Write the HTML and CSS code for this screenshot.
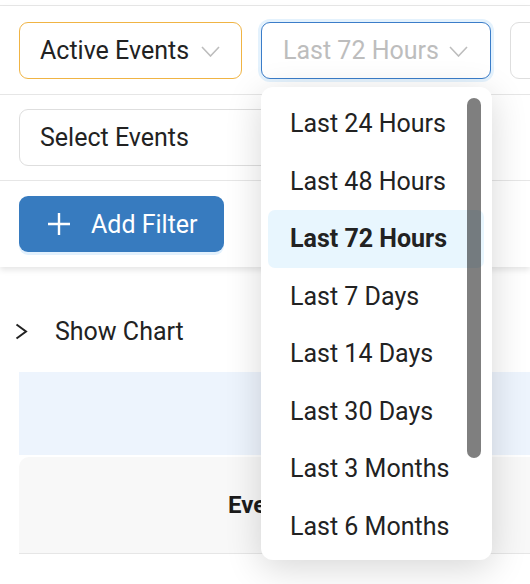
FILE: index.html
```html
<!DOCTYPE html>
<html lang="en">
<head>
<meta charset="utf-8">
<title>Events</title>
<link rel="stylesheet" href="styles.css">
</head>
<body>
<div class="page">
  <div class="topbar"></div>
  <section class="filters">
    <div class="row row-selects">
      <button class="select select-active">
        <span class="select-label">Active Events</span>
        <svg class="chev" width="19" height="11" viewBox="0 0 19 11"><polyline points="1,1 9.5,10 18,1" fill="none" stroke="#bdbdbd" stroke-width="1.6"/></svg>
      </button>
      <button class="select select-focus">
        <span class="select-label placeholder">Last 72 Hours</span>
        <svg class="chev" width="19" height="11" viewBox="0 0 19 11"><polyline points="1,1 9.5,10 18,1" fill="none" stroke="#bdbdbd" stroke-width="1.6"/></svg>
      </button>
      <button class="select select-more"></button>
    </div>
    <div class="row row-events">
      <div class="input">Select Events</div>
    </div>
    <div class="row row-actions">
      <button class="add-filter">
        <svg width="24" height="24" viewBox="0 0 24 24"><path d="M12 1v22M1 12h22" stroke="#fff" stroke-width="2.4" fill="none"/></svg>
        <span>Add Filter</span>
      </button>
    </div>
  </section>

  <div class="chart-toggle">
    <svg width="13" height="17" viewBox="0 0 13 17"><polyline points="1.5,1.5 11,8.5 1.5,15.5" fill="none" stroke="#222" stroke-width="2"/></svg>
    <span>Show Chart</span>
  </div>

  <div class="band"></div>
  <div class="table-head">
    <span class="th">Events</span>
  </div>

  <div class="dropdown">
    <ul class="options">
      <li class="option">Last 24 Hours</li>
      <li class="option">Last 48 Hours</li>
      <li class="option selected">Last 72 Hours</li>
      <li class="option">Last 7 Days</li>
      <li class="option">Last 14 Days</li>
      <li class="option">Last 30 Days</li>
      <li class="option">Last 3 Months</li>
      <li class="option">Last 6 Months</li>
    </ul>
    <div class="scrollbar"></div>
  </div>
</div>
</body>
</html>
```

FILE: styles.css
```css
* { box-sizing: border-box; }
html, body {
  margin: 0;
  padding: 0;
  background: #fff;
  overflow: hidden;
}
body {
  font-family: Roboto, "Noto Sans", "Liberation Sans", sans-serif;
  color: #222;
  font-size: 25px;
}
.page {
  position: relative;
  width: 530px;
  height: 584px;
  overflow: hidden;
}
.topbar {
  height: 6px;
  border-bottom: 1px solid #e8e8e8;
}
.filters {
  background: #fff;
  box-shadow: 0 3px 6px rgba(0,0,0,0.10);
  position: relative;
}
.row {
  padding-left: 19px;
  display: flex;
  gap: 19px;
  overflow: hidden;
}
.row-selects {
  padding-top: 16px;
  padding-bottom: 15px;
  border-bottom: 1px solid #e6e6e6;
}
.row-events {
  padding-top: 14px;
  padding-bottom: 14px;
  border-bottom: 1px solid #e6e6e6;
}
.row-actions {
  padding-top: 15px;
  padding-bottom: 15px;
}
.select {
  flex-shrink: 0;
  height: 57px;
  border-radius: 9px;
  background: #fff;
  display: flex;
  align-items: center;
  justify-content: space-between;
  padding: 0 21px 0 20px;
  font: inherit;
  color: #222;
}
.select-active {
  width: 223px;
  border: 1px solid #f0b444;
}
.select-focus {
  width: 230px;
  border: 1px solid #3b7dc9;
  box-shadow: 0 0 0 3px #e4f2fd;
  padding-left: 21px;
  padding-right: 22px;
}
.select-more {
  width: 200px;
  border: 1px solid #dedede;
}
.placeholder { color: #bdbdbd; }
.chev { display: block; margin-top: 2px; }
.input {
  width: 300px;
  height: 57px;
  border: 1px solid #dedede;
  border-radius: 9px;
  display: flex;
  align-items: center;
  padding-left: 20px;
  flex-shrink: 0;
}
.add-filter {
  width: 205px;
  height: 56px;
  background: #377bbf;
  color: #fff;
  border: none;
  border-radius: 9px;
  font: inherit;
  display: flex;
  align-items: center;
  gap: 20px;
  padding-left: 28px;
  box-shadow: 0 3px 0 #e3f1fd;
}
.add-filter svg { display: block; }
.chart-toggle {
  display: flex;
  align-items: center;
  height: 128px;
  padding-left: 15px;
  gap: 27px;
}
.chart-toggle svg { display: block; }
.band {
  margin-left: 19px;
  height: 83px;
  background: #edf4fd;
  margin-top: -23px;
}
.table-head {
  margin-left: 19px;
  margin-top: 2px;
  height: 97px;
  background: #f8f8f8;
  border-top-left-radius: 10px;
  border-bottom: 1px solid #e6e6e6;
  display: flex;
  align-items: center;
  padding-left: 209px;
}
.th {
  font-weight: 700;
  font-size: 24px;
  color: #1c1c1c;
}
.dropdown {
  position: absolute;
  left: 261px;
  top: 87px;
  width: 231px;
  height: 473px;
  background: #fff;
  border-radius: 12px;
  box-shadow: 0 8px 36px rgba(0,0,0,0.16);
  padding: 8px 8px 0 7px;
}
.options {
  list-style: none;
  margin: 0;
  padding: 0;
}
.option {
  height: 57.5px;
  display: flex;
  align-items: center;
  padding-left: 22px;
  border-radius: 7px;
  color: #222;
}
.option.selected {
  background: #e8f6fe;
  font-weight: 700;
}
.scrollbar {
  position: absolute;
  right: 11px;
  top: 11px;
  width: 14px;
  height: 360px;
  border-radius: 7px;
  background: rgba(0,0,0,0.5);
}
```
